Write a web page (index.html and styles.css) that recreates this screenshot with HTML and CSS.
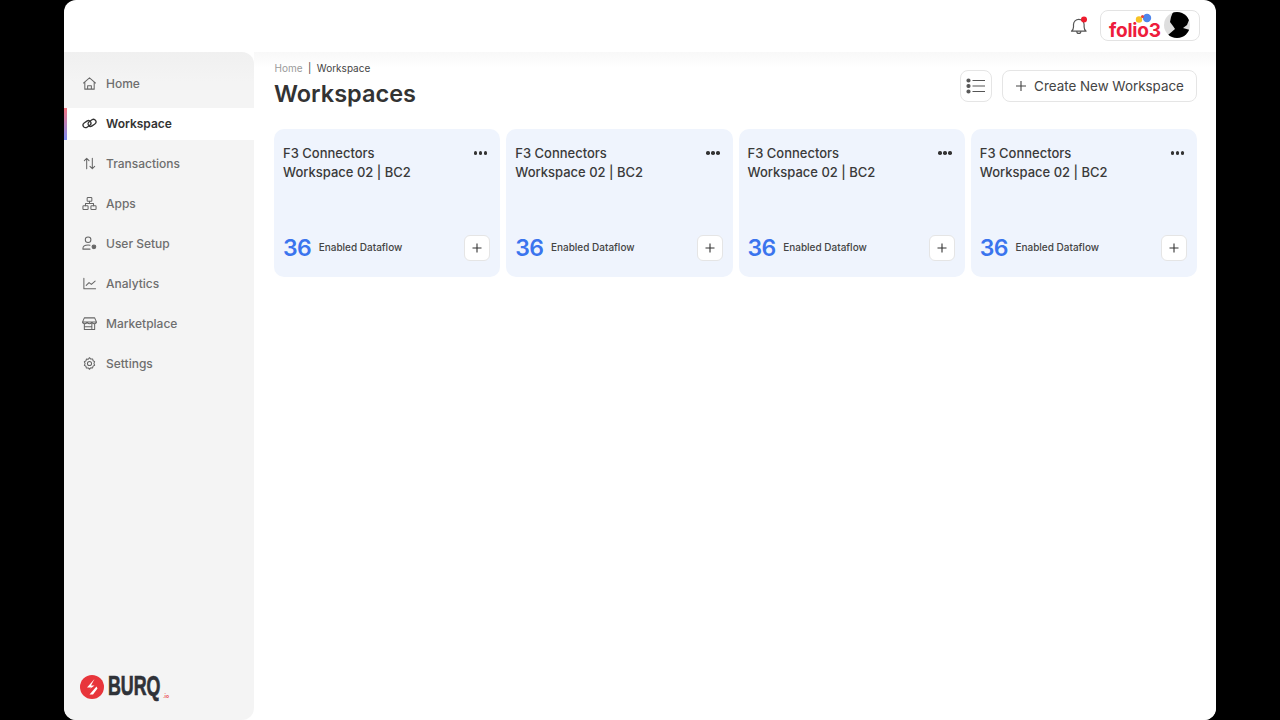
FILE: index.html
```html
<!DOCTYPE html>
<html lang="en">
<head>
<meta charset="utf-8">
<title>Workspaces</title>
<link rel="stylesheet" href="styles.css">
</head>
<body>
<div class="app">
  <header class="topbar">
    <svg class="bell" viewBox="0 0 20 20" width="20" height="20" fill="none" stroke="#555" stroke-width="1.2" stroke-linejoin="round" stroke-linecap="round"><path d="M2.500 15.200c1.300-1.200 2-2.500 2-4.300V8.600a5.300 5.300 0 0 1 10.600 0v2.300c0 1.800.7 3.100 2 4.300z"/><path d="M7.800 15.500c0 2.600 4 2.600 4 0"/><circle cx="15" cy="3.500" r="3" fill="#ee1c2e" stroke="none"/></svg>
    <div class="brand">
      <span class="folio"><svg class="dots" viewBox="0 0 22 14" width="22" height="14"><circle cx="5" cy="7.500" r="3.200" fill="#f7c325"/><circle cx="13" cy="6" r="4.200" fill="#4f86ec"/><circle cx="8.500" cy="4.500" r="1.500" fill="#e8443a"/></svg>folio3</span>
      <svg class="avatar" viewBox="0 0 26 26" width="26" height="26"><defs><clipPath id="avatar-clip"><circle cx="13" cy="13" r="13"/></clipPath></defs><circle cx="13" cy="13" r="13" fill="#dedede"/><path clip-path="url(#avatar-clip)" d="M9 0h12l4 8-2 5-4 3 7 2v8H3l1-3 7-6 -2-3-3-4 1-5z" fill="#000"/></svg>
    </div>
  </header>
  <div class="body">
    <aside class="sidebar">
      <nav class="nav">
        <a class="nav-item"><svg class="ico" viewBox="0 0 16 16"><path d="M1.500 7.500 8 2l6.500 5.500M3 6.500V14h10V6.500M6 14v-3.500h4V14"/></svg><span>Home</span></a>
        <a class="nav-item active"><svg class="ico" viewBox="0 0 16 16"><rect x=".8" y="6" width="9" height="5.400" rx="2.700" transform="rotate(-35 5.300 8.700)"/><rect x="6.200" y="4.600" width="9" height="5.400" rx="2.700" transform="rotate(-35 10.700 7.300)"/></svg><span>Workspace</span></a>
        <a class="nav-item"><svg class="ico" viewBox="0 0 16 16"><path d="M5 13.500v-11M2.500 5 5 2.500 7.500 5M11 2.500v11M8.500 11l2.500 2.500 2.500-2.500"/></svg><span>Transactions</span></a>
        <a class="nav-item"><svg class="ico" viewBox="0 0 16 16"><rect x="5.500" y="1.500" width="5" height="4" rx=".8"/><rect x="1" y="10.500" width="5.500" height="4" rx=".8"/><rect x="9.500" y="10.500" width="5.500" height="4" rx=".8"/><path d="M8 5.500v2.500M3.700 10.500V8h8.600v2.500"/></svg><span>Apps</span></a>
        <a class="nav-item"><svg class="ico" viewBox="0 0 16 16"><circle cx="6.500" cy="4" r="3"/><path d="M1 14v-1c0-2 2.200-3.500 5.500-3.500 1 0 1.500.1 2 .3M1 14h7.500"/><circle cx="12.700" cy="11.500" r="2" fill="#666"/></svg><span>User Setup</span></a>
        <a class="nav-item"><svg class="ico" viewBox="0 0 16 16"><path d="M2 2.500V13.500H14.500M4.500 10l3-3 2.500 2 4-3.500"/></svg><span>Analytics</span></a>
        <a class="nav-item"><svg class="ico" viewBox="0 0 16 16"><path d="M2.500 2h11l2 4.500H.5zM.5 6.500c0 2.200 5 2.200 5 0 0 2.200 5 2.200 5 0 0 2.200 5 2.200 5 0M2.500 8.500V14.500h11V8.500M2.500 11.500h8M10.500 8.500V14.500"/></svg><span>Marketplace</span></a>
        <a class="nav-item"><svg class="ico" viewBox="0 0 16 16"><path d="M8 1.800l1.300 1.500 2-.2.500 1.900 1.700 1-.8 1.900.8 1.900-1.700 1-.5 1.900-2-.2L8 14.200l-1.300-1.500-2 .2-.5-1.900-1.700-1 .8-1.900-.8-1.900 1.700-1 .5-1.900 2 .2z"/><circle cx="8" cy="8" r="2.200"/></svg><span>Settings</span></a>
      </nav>
      <div class="burq">
        <svg class="burq-mark" viewBox="0 0 24 24" width="24" height="24"><circle cx="12" cy="12" r="12" fill="#e8353b"/><path d="M14.500 4 7 12.500h4.500L8.500 15l6-4.500H11zM16.500 11.500 9.500 19.500H13l4.500-6z" fill="#fff"/></svg>
        <span class="burq-word">BURQ</span><span class="burq-io">.io</span>
      </div>
    </aside>
    <main class="main">
      <div class="page-head">
        <div>
          <div class="crumbs"><span class="crumb-home">Home</span><span class="crumb-sep">|</span><span>Workspace</span></div>
          <h1>Workspaces</h1>
        </div>
        <div class="actions">
          <button class="view-btn" aria-label="List view"><svg viewBox="0 0 20 16" width="20" height="16" fill="none" stroke="#555" stroke-width="1.200"><circle cx="2.500" cy="2.500" r="1.500" fill="#555"/><circle cx="2.500" cy="8" r="1.500" fill="#555"/><circle cx="2.500" cy="13.500" r="1.500" fill="#555"/><path d="M6.500 2.500H19M6.500 8H19M6.500 13.500H19"/></svg></button>
          <button class="create-btn"><svg viewBox="0 0 12 12" width="12" height="12" fill="none" stroke="#444" stroke-width="1.100"><path d="M6 1v10M1 6h10"/></svg>Create New Workspace</button>
        </div>
      </div>
      <section class="cards">
        <article class="card">
          <div class="card-top"><h2>F3 Connectors<br>Workspace 02 | BC2</h2><span class="more"><i></i><i></i><i></i></span></div>
          <div class="card-bottom"><strong>36</strong><span class="label">Enabled Dataflow</span><button class="add" aria-label="Add"><svg viewBox="0 0 12 12" width="12" height="12" fill="none" stroke="#333" stroke-width="1.100"><path d="M6 1.500v9M1.500 6h9"/></svg></button></div>
        </article>
        <article class="card">
          <div class="card-top"><h2>F3 Connectors<br>Workspace 02 | BC2</h2><span class="more"><i></i><i></i><i></i></span></div>
          <div class="card-bottom"><strong>36</strong><span class="label">Enabled Dataflow</span><button class="add" aria-label="Add"><svg viewBox="0 0 12 12" width="12" height="12" fill="none" stroke="#333" stroke-width="1.100"><path d="M6 1.500v9M1.500 6h9"/></svg></button></div>
        </article>
        <article class="card">
          <div class="card-top"><h2>F3 Connectors<br>Workspace 02 | BC2</h2><span class="more"><i></i><i></i><i></i></span></div>
          <div class="card-bottom"><strong>36</strong><span class="label">Enabled Dataflow</span><button class="add" aria-label="Add"><svg viewBox="0 0 12 12" width="12" height="12" fill="none" stroke="#333" stroke-width="1.100"><path d="M6 1.500v9M1.500 6h9"/></svg></button></div>
        </article>
        <article class="card">
          <div class="card-top"><h2>F3 Connectors<br>Workspace 02 | BC2</h2><span class="more"><i></i><i></i><i></i></span></div>
          <div class="card-bottom"><strong>36</strong><span class="label">Enabled Dataflow</span><button class="add" aria-label="Add"><svg viewBox="0 0 12 12" width="12" height="12" fill="none" stroke="#333" stroke-width="1.100"><path d="M6 1.500v9M1.500 6h9"/></svg></button></div>
        </article>
      </section>
    </main>
  </div>
</div>
</body>
</html>
```

FILE: styles.css
```css
* { box-sizing: border-box; }
html, body { margin: 0; height: 100%; }
body {
  background: #000;
  font-family: Inter, "Noto Sans", "Liberation Sans", sans-serif;
  color: #333;
  overflow: hidden;
}
.app {
  width: 1152px;
  height: 720px;
  margin: 0 auto;
  background: #fff;
  border-radius: 12px;
  overflow: hidden;
  display: flex;
  flex-direction: column;
}
.topbar {
  height: 52px;
  flex: none;
  display: flex;
  align-items: center;
  justify-content: flex-end;
  gap: 11px;
  padding: 0 16px 2px 0;
}
.bell { display: block; margin-top: 2px; }
.brand {
  width: 100px;
  height: 31px;
  border: 1px solid #e3e3e3;
  border-radius: 8px;
  display: flex;
  align-items: center;
  justify-content: space-between;
  padding: 0 8px;
}
.folio {
  position: relative;
  font-size: 19px;
  font-weight: 700;
  color: #ee1c3c;
  line-height: 1;
  margin-top: 10px;
  letter-spacing: -.2px;
}
.dots { position: absolute; left: 25px; top: -9px; }
.avatar { flex: none; margin-right: 1px; }
.body { flex: 1; display: flex; min-height: 0; }
.sidebar {
  width: 190px;
  flex: none;
  background: linear-gradient(#f0f0f0, #f4f4f4 30px);
  border-radius: 0 12px 12px 12px;
  padding-top: 16px;
  display: flex;
  flex-direction: column;
  justify-content: space-between;
}
.nav { display: flex; flex-direction: column; gap: 8px; }
.nav-item {
  height: 32px;
  display: flex;
  align-items: center;
  gap: 9px;
  padding: 0 0 2px 18px;
  font-size: 12px;
  font-weight: 500;
  color: #6e6e6e;
}
.ico {
  width: 15px;
  height: 15px;
  fill: none;
  stroke: #666;
  stroke-width: 1.100;
  stroke-linejoin: round;
  stroke-linecap: round;
  flex: none;
}
.active {
  background: #fff;
  color: #333;
  font-weight: 600;
  position: relative;
}
.active .ico { stroke: #333; stroke-width: 1.400; }
.active::before {
  content: "";
  position: absolute;
  left: 0;
  top: 0;
  bottom: 0;
  width: 3px;
  background: linear-gradient(#f5747f, #7d8cf2);
}
.burq {
  display: flex;
  align-items: center;
  padding: 0 0 15px 16px;
  height: 52px;
}
.burq-mark { flex: none; }
.burq-word {
  display: inline-block;
  font-family: "Liberation Sans", sans-serif;
  font-weight: 700;
  font-size: 27px;
  color: #2f3238;
  -webkit-text-stroke: .7px #2f3238;
  transform: scaleX(.66);
  transform-origin: left center;
  margin-left: 4px;
  width: 55px;
  line-height: 1;
}
.burq-io { font-size: 5px; color: #e8353b; margin-top: 19px; font-weight: 600; }
.main {
  flex: 1;
  min-width: 0;
  padding: 10px 19px 0 20px;
  background: linear-gradient(#f8f8f8, #fff 16px);
}
.page-head {
  display: flex;
  justify-content: space-between;
  align-items: flex-start;
  height: 67px;
}
.crumbs {
  display: flex;
  gap: 5.500px;
  font-size: 10px;
  line-height: 13px;
  color: #444;
  padding-left: .5px;
}
.crumb-home { color: #9a9a9a; }
h1 {
  margin: 3px 0 0;
  font-size: 23.500px;
  line-height: 32px;
  font-weight: 600;
  color: #333;
}
.actions { display: flex; gap: 10px; margin-top: 8px; }
.view-btn, .create-btn, .add {
  background: #fff;
  border: 1px solid #e5e5e5;
  font-family: inherit;
  padding: 0;
  display: flex;
  align-items: center;
  justify-content: center;
}
.view-btn { width: 32px; height: 32px; border-radius: 8px; }
.create-btn {
  width: 195px;
  height: 32px;
  border-radius: 8px;
  gap: 7px;
  font-size: 13.400px;
  color: #444;
}
.cards {
  display: grid;
  grid-template-columns: repeat(4, 1fr);
  gap: 6px;
}
.card {
  height: 148px;
  background: #eff4fd;
  border-radius: 10px;
  padding: 15px 10px 16px 9px;
  display: flex;
  flex-direction: column;
  justify-content: space-between;
}
.card-top { display: flex; justify-content: space-between; align-items: flex-start; }
h2 {
  margin: 0;
  font-size: 13px;
  line-height: 19px;
  font-weight: 500;
  color: #3a3a3a;
}
.more { display: flex; gap: 1.500px; padding: 7px 3px 0 0; }
.more i { width: 3.500px; height: 3.500px; border-radius: 50%; background: #333; }
.card-bottom { display: flex; align-items: center; }
.card-bottom strong {
  font-size: 23px;
  line-height: 26px;
  font-weight: 600;
  color: #3a74ee;
  margin-right: 7.500px;
  letter-spacing: -.6px;
}
.label { font-size: 10px; font-weight: 500; color: #444; margin-top: -2px; }
.add {
  width: 26px;
  height: 26px;
  border-radius: 6px;
  margin-left: auto;
}
```
